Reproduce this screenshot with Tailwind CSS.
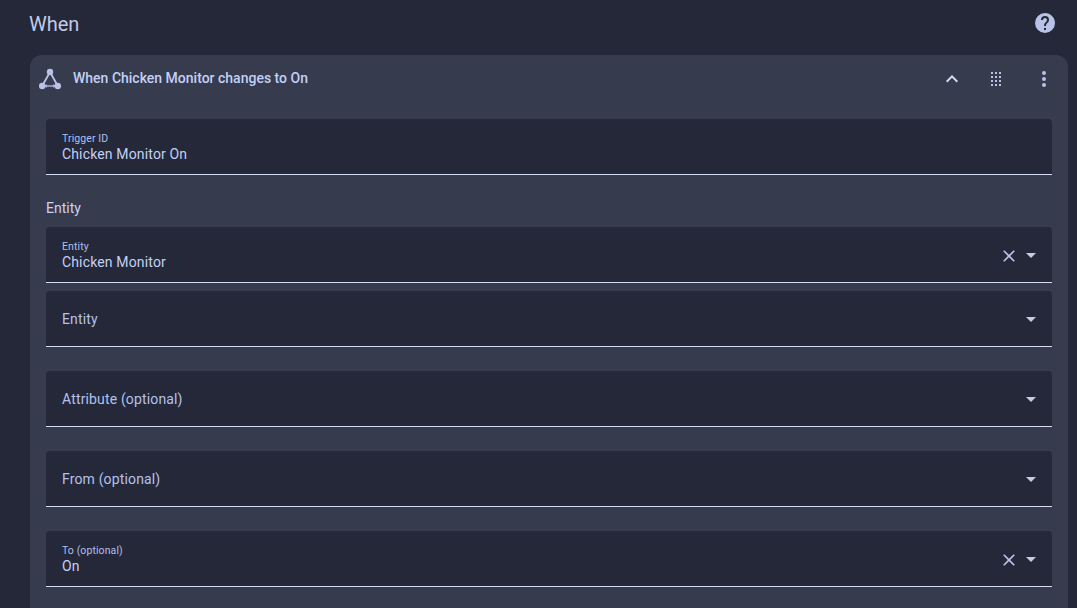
<!DOCTYPE html>
<html lang="en">
<head>
  <meta charset="UTF-8" />
  <title>When</title>
  <script src="https://cdn.jsdelivr.net/npm/@tailwindcss/browser@4"></script>
</head>
<body class="h-[608px] overflow-hidden bg-[#252839] font-['Roboto',sans-serif] text-[#b9c3e6]">

  <!-- Section heading -->
  <div class="flex h-[55px] items-start justify-between pl-[29px] pr-[20px]">
    <h2 class="mt-[10px] text-[20px] leading-[28px] text-[#c3cbe6]">When</h2>
    <svg class="mt-[11px] h-6 w-6 fill-[#b9c3e6]" viewBox="0 0 24 24"><path d="M15.07,11.25L14.17,12.17C13.45,12.89 13,13.5 13,15H11V14.5C11,13.39 11.45,12.39 12.17,11.67L13.41,10.41C13.78,10.05 14,9.55 14,9C14,7.89 13.1,7 12,7A2,2 0 0,0 10,9H8A4,4 0 0,1 12,5A4,4 0 0,1 16,9C16,9.88 15.64,10.67 15.07,11.25M13,19H11V17H13M12,2A10,10 0 0,0 2,12A10,10 0 0,0 12,22A10,10 0 0,0 22,12C22,6.47 17.5,2 12,2Z"/></svg>
  </div>

  <!-- Trigger card -->
  <div class="ml-[30px] w-[1038px] rounded-t-[12px] bg-[#363b4e] pb-10">
    <div class="flex h-12 items-center pl-[8px]">
      <svg class="h-6 w-6 fill-[#b9c3e6] stroke-[#b9c3e6]" viewBox="0 0 24 24">
        <circle cx="12" cy="5" r="3.2" stroke="none"/>
        <circle cx="4.2" cy="19" r="3.2" stroke="none"/>
        <circle cx="19.8" cy="19" r="3.2" stroke="none"/>
        <path d="M12 5L4.2 19M12 5L19.8 19" fill="none" stroke-width="1.8"/>
        <path d="M8 19H16" fill="none" stroke-width="1.3"/>
        <path d="M8.6 17v4L6.4 19zM15.4 17v4l2.2-2z" stroke="none"/>
      </svg>
      <span class="ml-[11px] -mt-[2px] text-[14px] font-medium text-[#c3d0f5]">When Chicken Monitor changes to On</span>
      <div class="ml-auto flex items-center">
        <svg class="h-6 w-6 fill-[#d5dcf5]" viewBox="0 0 24 24"><path d="M7.41,15.41L12,10.83L16.59,15.41L18,14L12,8L6,14L7.41,15.41Z"/></svg>
        <svg class="ml-[20px] h-6 w-6 fill-[#b9c3e6]" viewBox="0 0 24 24"><path d="M7 5h2v2H7zM11 5h2v2h-2zM15 5h2v2h-2zM7 9h2v2H7zM11 9h2v2h-2zM15 9h2v2h-2zM7 13h2v2H7zM11 13h2v2h-2zM15 13h2v2h-2zM7 17h2v2H7zM11 17h2v2h-2zM15 17h2v2h-2z"/></svg>
        <svg class="ml-[24px] mr-[12px] h-6 w-6 fill-[#b9c3e6]" viewBox="0 0 24 24"><path d="M12,16A2,2 0 0,1 14,18A2,2 0 0,1 12,20A2,2 0 0,1 10,18A2,2 0 0,1 12,16M12,10A2,2 0 0,1 14,12A2,2 0 0,1 12,14A2,2 0 0,1 10,12A2,2 0 0,1 12,10M12,4A2,2 0 0,1 14,6A2,2 0 0,1 12,8A2,2 0 0,1 10,6A2,2 0 0,1 12,4Z"/></svg>
      </div>
    </div>

    <div class="px-4 pt-4">
      <!-- Trigger ID -->
      <div class="h-14 rounded-t border-b border-[#d5dcf5] bg-[#252839] px-4 pt-[13px]">
        <div class="text-[10.5px] leading-[13px] tracking-[0.1px] text-[#b0bfec]">Trigger ID</div>
        <div class="text-[14px] leading-[18px] tracking-[0.15px] text-[#c3d0f5]">Chicken Monitor On</div>
      </div>

      <div class="flex h-[52px] items-start pt-[24px] text-[14px] leading-[18px] text-[#c9d2f0]">Entity</div>

      <!-- Entity, filled -->
      <div class="flex h-14 items-center rounded-t border-b border-[#d5dcf5] bg-[#252839] px-4">
        <div class="grow pt-[1px]">
          <div class="pt-[1px] text-[10.5px] leading-[14px] tracking-[0.1px] text-[#b0bfec]">Entity</div>
          <div class="text-[14px] leading-[17px] tracking-[0.15px] text-[#c3d0f5]">Chicken Monitor</div>
        </div>
        <svg class="mt-[3px] h-5 w-5 fill-[#b9c3e6]" viewBox="0 0 24 24"><path d="M19,6.41L17.59,5L12,10.59L6.41,5L5,6.41L10.59,12L5,17.59L6.41,19L12,13.41L17.59,19L19,17.59L13.41,12L19,6.41Z"/></svg>
        <svg class="-mr-[7px] mt-[1px] h-6 w-6 fill-[#c3cbe6]" viewBox="0 0 24 24"><path d="M7,10L12,15L17,10H7Z"/></svg>
      </div>

      <!-- Entity, empty -->
      <div class="mt-2 flex h-14 items-center rounded-t border-b border-[#d5dcf5] bg-[#252839] px-4">
        <span class="grow pt-[2px] text-[14px] tracking-[0.15px] text-[#b3c2ec]">Entity</span>
        <svg class="-mr-[7px] mt-[1px] h-6 w-6 fill-[#c3cbe6]" viewBox="0 0 24 24"><path d="M7,10L12,15L17,10H7Z"/></svg>
      </div>

      <!-- Attribute -->
      <div class="mt-6 flex h-14 items-center rounded-t border-b border-[#d5dcf5] bg-[#252839] px-4">
        <span class="grow pt-[2px] text-[14px] tracking-[0.15px] text-[#b3c2ec]">Attribute (optional)</span>
        <svg class="-mr-[7px] mt-[1px] h-6 w-6 fill-[#c3cbe6]" viewBox="0 0 24 24"><path d="M7,10L12,15L17,10H7Z"/></svg>
      </div>

      <!-- From -->
      <div class="mt-6 flex h-14 items-center rounded-t border-b border-[#d5dcf5] bg-[#252839] px-4">
        <span class="grow pt-[2px] text-[14px] tracking-[0.15px] text-[#b3c2ec]">From (optional)</span>
        <svg class="-mr-[7px] mt-[1px] h-6 w-6 fill-[#c3cbe6]" viewBox="0 0 24 24"><path d="M7,10L12,15L17,10H7Z"/></svg>
      </div>

      <!-- To -->
      <div class="mt-6 flex h-14 items-center rounded-t border-b border-[#d5dcf5] bg-[#252839] px-4">
        <div class="grow pt-[1px]">
          <div class="pt-[1px] text-[10.5px] leading-[14px] tracking-[0.1px] text-[#b0bfec]">To (optional)</div>
          <div class="text-[14px] leading-[17px] tracking-[0.15px] text-[#c3d0f5]">On</div>
        </div>
        <svg class="mt-[3px] h-5 w-5 fill-[#b9c3e6]" viewBox="0 0 24 24"><path d="M19,6.41L17.59,5L12,10.59L6.41,5L5,6.41L10.59,12L5,17.59L6.41,19L12,13.41L17.59,19L19,17.59L13.41,12L19,6.41Z"/></svg>
        <svg class="-mr-[7px] mt-[1px] h-6 w-6 fill-[#c3cbe6]" viewBox="0 0 24 24"><path d="M7,10L12,15L17,10H7Z"/></svg>
      </div>
    </div>
  </div>
</body>
</html>
